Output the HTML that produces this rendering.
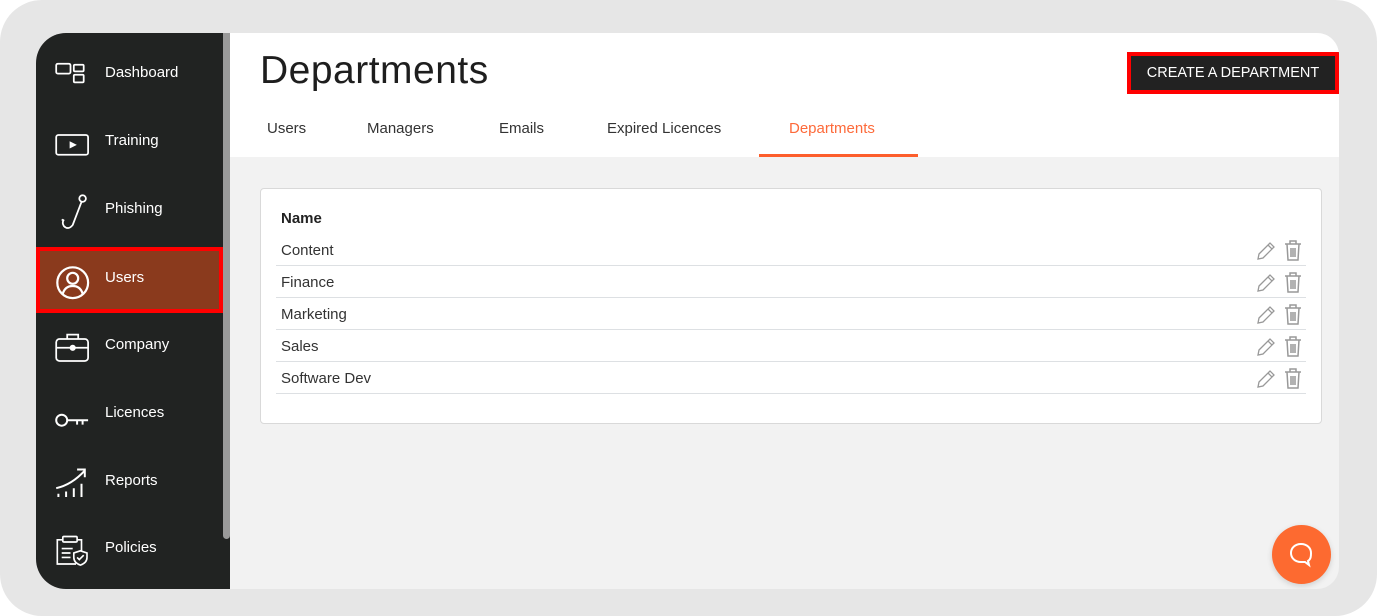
<!DOCTYPE html>
<html><head><style>
*{margin:0;padding:0;box-sizing:border-box}
body{width:1377px;height:616px;background:#fff;font-family:"Liberation Sans",sans-serif;position:relative;overflow:hidden}
.frame{position:absolute;left:0;top:0;width:1377px;height:616px;background:#e6e6e6;border-radius:42px}
.screen{position:absolute;left:36px;top:33px;width:1303px;height:556px;background:#f2f2f2;border-radius:30px 22px 22px 30px;overflow:hidden}
.side{position:absolute;left:0;top:0;width:194px;height:556px;background:#212322}
.sb{position:absolute;left:187px;top:0;width:7px;height:506px;background:#9a9a9a;border-radius:0 0 4px 4px}
.item{position:absolute;left:0;width:187px;height:66px;color:#fff;font-size:15px}
.item svg{position:absolute;left:18px;top:17px;transform:scale(1.1);transform-origin:0 0}
.item span{position:absolute;left:69px;top:25px}
.active{background:#8a3a1d;border:4px solid #ff0000}
.active svg{left:14px;top:13px}.active span{left:65px;top:18px}
.head{position:absolute;left:194px;top:0;width:1109px;height:124px;background:#fff}
h1{position:absolute;left:30px;top:16px;font-weight:400;font-size:39px;color:#1e1e1e;letter-spacing:.5px}
.btn{position:absolute;left:897px;top:19px;width:212px;height:42px;background:#222;border:4px solid #ff0000;color:#fff;font-size:14.5px;line-height:34px;text-align:center}
.tab{position:absolute;top:87px;font-size:15px;color:#333}
.tab.on{color:#fd6a3a}
.ul{position:absolute;left:529px;top:121px;width:159px;height:3px;background:#fd5e2c}
.card{position:absolute;left:224px;top:155px;width:1062px;height:236px;background:#fff;border:1px solid #d9d9d9;border-radius:4px}
.nm{position:absolute;left:20px;top:21px;font-weight:700;font-size:15px;color:#222}
.row{position:absolute;left:15px;width:1030px;height:32px;border-bottom:1px solid #dde0e3;font-size:15px;color:#333}
.row span{position:absolute;left:5px;top:8px}
.row svg{position:absolute;top:5px}
.chat{position:absolute;left:1236px;top:492px;width:59px;height:59px;border-radius:50%;background:#fd6a30;box-shadow:0 2px 6px rgba(0,0,0,.15)}
</style></head><body>
<div class="frame"></div>
<div class="screen">
 <div class="side">
  <div class="item" style="top:6px"><svg width="32" height="32" fill="none" stroke="#fff" stroke-width="1.6"><rect x="2" y="7" width="13" height="9" rx="1.5"/><rect x="18" y="8" width="9" height="6" rx="1"/><rect x="18" y="17" width="9" height="7" rx="1"/></svg><span>Dashboard</span></div>
  <div class="item" style="top:74px"><svg width="34" height="32" fill="none" stroke="#fff" stroke-width="1.6"><rect x="2" y="10" width="29" height="18" rx="2"/><path d="M15 17l4 2-4 2z" fill="#fff"/></svg><span>Training</span></div>
  <div class="item" style="top:142px"><svg width="34" height="36" fill="none" stroke="#fff" stroke-width="1.6"><circle cx="26" cy="6" r="3"/><path d="M25 9L17 30q-4 5-8 1q-2-3 0-6M7 25l2 1"/></svg><span>Phishing</span></div>
  <div class="item active" style="top:214px"><svg width="34" height="34" fill="none" stroke="#fff" stroke-width="2"><circle cx="17" cy="17" r="14"/><circle cx="17" cy="13" r="5"/><path d="M8 27q2-7 9-7t9 7"/></svg><span>Users</span></div>
  <div class="item" style="top:278px"><svg width="34" height="34" fill="none" stroke="#fff" stroke-width="1.6"><rect x="2" y="10" width="29" height="20" rx="3"/><path d="M12 10V6h10v4M2 18h29"/><circle cx="17" cy="18" r="2" fill="#fff"/></svg><span>Company</span></div>
  <div class="item" style="top:346px"><svg width="34" height="34" fill="none" stroke="#fff" stroke-width="1.8"><circle cx="7" cy="22" r="5"/><path d="M12 22h19M21 22v4M26 22v4"/></svg><span>Licences</span></div>
  <div class="item" style="top:414px"><svg width="34" height="36" fill="none" stroke="#fff" stroke-width="1.8"><path d="M2 22q14-3 26-16M21 5h7v7M4 30v-3M11 30v-5M18 30v-8M25 30v-12"/></svg><span>Reports</span></div>
  <div class="item" style="top:481px"><svg width="34" height="36" fill="none" stroke="#fff" stroke-width="1.5"><path d="M20 30H3V8h5M21 8h4v10"/><rect x="8" y="5" width="13" height="5" rx="1"/><path d="M7 16h10M7 20h8M7 24h8"/><path d="M24 18l6 2v4q0 5-6 7q-6-2-6-7v-4z"/><path d="M21 24l2 2 4-4"/></svg><span>Policies</span></div>
 </div>
 <div class="sb"></div>
 <div class="head">
  <h1>Departments</h1>
  <div class="btn">CREATE A DEPARTMENT</div>
  <div class="tab" style="left:37px">Users</div>
  <div class="tab" style="left:137px">Managers</div>
  <div class="tab" style="left:269px">Emails</div>
  <div class="tab" style="left:377px">Expired Licences</div>
  <div class="tab on" style="left:559px">Departments</div>
  <div class="ul"></div>
 </div>
 <div class="card">
  <div class="nm">Name</div>
  <div class="row" style="top:45px"><span>Content</span><svg style="left:978px" width="24" height="24" fill="none" stroke="#999" stroke-width="1.3"><path d="M4 20l1-5L16 4l4 4L9 19zM14 6l4 4"/></svg><svg style="left:1007px" width="20" height="24" fill="none" stroke="#999" stroke-width="1.5"><path d="M2 5h16M7 5V2h6v3M4 5l1 16h10l1-16M8 9v9M10 9v9M12 9v9"/></svg></div>
  <div class="row" style="top:77px"><span>Finance</span><svg style="left:978px" width="24" height="24" fill="none" stroke="#999" stroke-width="1.3"><path d="M4 20l1-5L16 4l4 4L9 19zM14 6l4 4"/></svg><svg style="left:1007px" width="20" height="24" fill="none" stroke="#999" stroke-width="1.5"><path d="M2 5h16M7 5V2h6v3M4 5l1 16h10l1-16M8 9v9M10 9v9M12 9v9"/></svg></div>
  <div class="row" style="top:109px"><span>Marketing</span><svg style="left:978px" width="24" height="24" fill="none" stroke="#999" stroke-width="1.3"><path d="M4 20l1-5L16 4l4 4L9 19zM14 6l4 4"/></svg><svg style="left:1007px" width="20" height="24" fill="none" stroke="#999" stroke-width="1.5"><path d="M2 5h16M7 5V2h6v3M4 5l1 16h10l1-16M8 9v9M10 9v9M12 9v9"/></svg></div>
  <div class="row" style="top:141px"><span>Sales</span><svg style="left:978px" width="24" height="24" fill="none" stroke="#999" stroke-width="1.3"><path d="M4 20l1-5L16 4l4 4L9 19zM14 6l4 4"/></svg><svg style="left:1007px" width="20" height="24" fill="none" stroke="#999" stroke-width="1.5"><path d="M2 5h16M7 5V2h6v3M4 5l1 16h10l1-16M8 9v9M10 9v9M12 9v9"/></svg></div>
  <div class="row" style="top:173px"><span>Software Dev</span><svg style="left:978px" width="24" height="24" fill="none" stroke="#999" stroke-width="1.3"><path d="M4 20l1-5L16 4l4 4L9 19zM14 6l4 4"/></svg><svg style="left:1007px" width="20" height="24" fill="none" stroke="#999" stroke-width="1.5"><path d="M2 5h16M7 5V2h6v3M4 5l1 16h10l1-16M8 9v9M10 9v9M12 9v9"/></svg></div>
 </div>
 <div class="chat"><svg width="59" height="59" fill="none" stroke="#fff" stroke-width="2"><path d="M29 19c-6 0-10 4-10 9s4 9 10 9h4l4 3-1-4c3-2 3-5 3-8 0-5-4-9-10-9z"/></svg></div>
</div>
</body></html>
